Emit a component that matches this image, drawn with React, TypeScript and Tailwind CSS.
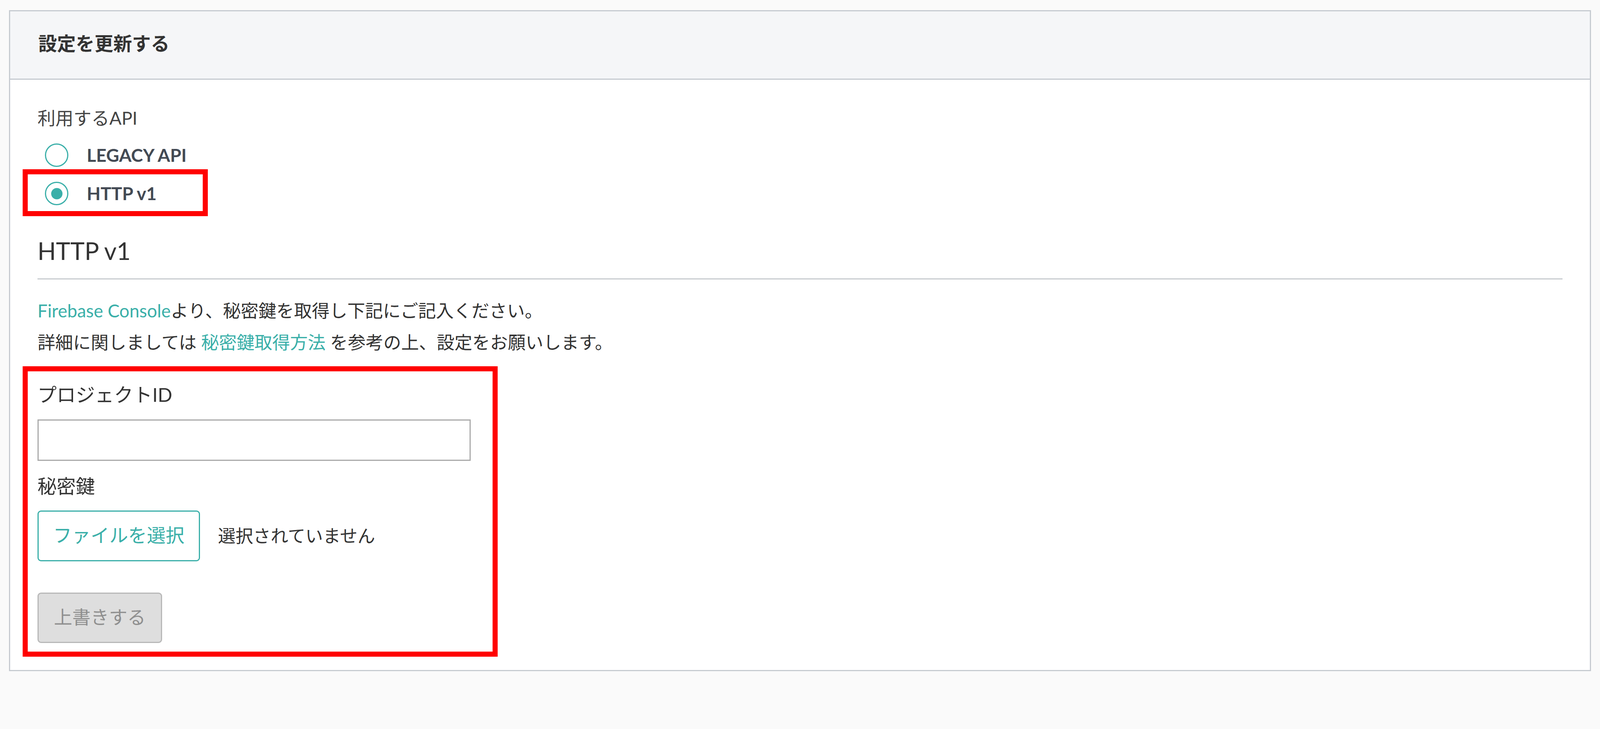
import React from "react";

const font = "font-['Lato','Noto_Sans_CJK_JP',sans-serif]";

function Radio({ label, checked }: { label: string; checked?: boolean }) {
  return (
    <label className="flex h-[60px] items-center">
      <span className="flex h-[60px] w-[60px] items-center justify-center rounded-full border-[3px] border-[#3aafa9] bg-white">
        {checked && <span className="h-[29px] w-[29px] rounded-full bg-[#3aafa9]" />}
      </span>
      <span className="ml-[47px] text-[46px] font-bold leading-none text-[#434a54]">{label}</span>
    </label>
  );
}

// red annotation frame drawn over a highlighted block
function Highlight({ className }: { className: string }) {
  return <span className={"pointer-events-none absolute border-[13px] border-[#ff0000] " + className} />;
}

export default function App() {
  return (
    <div className={`${font} min-h-screen w-full overflow-hidden bg-[#fafafa] px-[23px] pb-[26px] pt-[26px] text-[#333]`}>
      <div className="border-[3px] border-[#c6cbd1] bg-white">
        <div className="flex h-[175px] items-center border-b-[3px] border-[#c6cbd1] bg-[#f5f6f8] px-[72px] pb-[8px]">
          <h2 className="text-[48px] font-bold leading-none text-[#333]">設定を更新する</h2>
        </div>

        <div className="px-[70px] pb-[69px] pt-[70px]">
          <div className="text-[46px] leading-[56px] text-[#444]">利用するAPI</div>

          <div className="mt-[37px] pl-[19px]">
            <Radio label="LEGACY API" />
            <div className="relative mt-[38px]">
              <Radio label="HTTP v1" checked />
              <Highlight className="-left-[57px] -top-[32px] -bottom-[28px] w-[474px]" />
            </div>
          </div>

          <h3 className="mt-[79px] border-b-[3px] border-[#c8ccd0] pb-[34px] text-[62px] font-normal leading-[74px] text-[#333]">
            HTTP v1
          </h3>

          <div className="mt-[39px] text-[45.5px] leading-[81px] text-[#333]">
            <p>
              <a className="text-[#3aafa9]">Firebase Console</a>より、秘密鍵を取得し下記にご記入ください。
            </p>
            <p>
              詳細に関しましては <a className="text-[#3aafa9]">秘密鍵取得方法</a> を参考の上、設定をお願いします。
            </p>
          </div>

          <div className="relative mt-[60px]">
            <Highlight className="-left-[38px] -top-[39px] -bottom-[35px] w-[1216px]" />
            <div className="text-[49px] leading-[66px]">プロジェクトID</div>
            <input
              type="text"
              className="mt-[31px] block h-[106px] w-[1109px] border-[3px] border-[#aaaaaa] bg-white px-[18px] text-[44px] outline-none"
            />
            <div className="mt-[31px] text-[49px] leading-[66px]">秘密鍵</div>
            <div className="mt-[30px] flex items-center">
              <button
                type="button"
                className="flex h-[130px] w-[416px] items-center justify-center rounded-[9px] border-[3px] border-[#3aafa9] bg-white pb-[5px] text-[48px] text-[#3aafa9]"
              >
                ファイルを選択
              </button>
              <span className="ml-[46px] text-[45px] leading-[66px] text-[#333]">選択されていません</span>
            </div>
            <button
              type="button"
              disabled
              className="mt-[80px] flex h-[129px] w-[319px] items-center justify-center rounded-[9px] border-[3px] border-[#b8b8b8] bg-[#dedede] pb-[5px] text-[47px] text-[#8f8f8f]"
            >
              上書きする
            </button>
          </div>
        </div>
      </div>
    </div>
  );
}
